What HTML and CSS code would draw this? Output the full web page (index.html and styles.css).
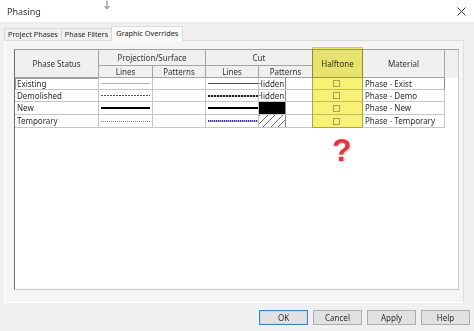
FILE: index.html
```html
<!DOCTYPE html>
<html>
<head>
<meta charset="utf-8">
<title>Phasing</title>
<link rel="stylesheet" href="styles.css">
</head>
<body>
<div class="dialog">
  <div class="titlebar">
    <span class="title">Phasing</span>
    <svg class="cursor" width="8" height="10" viewBox="0 0 8 10"><path d="M4 0.5 V8.5 M1.5 6 L4 8.8 L6.5 6" fill="none" stroke="#7a7a7a" stroke-width="1"/></svg>
    <svg class="close" width="9" height="9" viewBox="0 0 9 9"><path d="M0.5 0.5 L8.5 8.5 M8.5 0.5 L0.5 8.5" stroke="#333" stroke-width="1"/></svg>
  </div>
  <div class="tabs">
    <div class="tab">Project Phases</div>
    <div class="tab">Phase Filters</div>
    <div class="tab active">Graphic Overrides</div>
  </div>
  <div class="panel">
    <div class="gridbox">
      <div class="grid">
        <div class="h h-status">Phase Status</div>
        <div class="h h-proj">Projection/Surface</div>
        <div class="h h-cut">Cut</div>
        <div class="h h-half">Halftone</div>
        <div class="h h-mat">Material</div>
        <div class="h h-fill"></div>
        <div class="h">Lines</div>
        <div class="h">Patterns</div>
        <div class="h">Lines</div>
        <div class="h">Patterns</div>

        <div class="d name focus">Existing</div>
        <div class="d ln"><span class="line l-exist-p"></span></div>
        <div class="d"></div>
        <div class="d ln"><span class="line l-exist-c"></span></div>
        <div class="d pat"><span class="sw sw-text">Hidden</span></div>
        <div class="d half"><span class="chk"></span></div>
        <div class="d name mat first">Phase - Exist</div>
        <div class="d fill"></div>

        <div class="d name">Demolished</div>
        <div class="d ln"><span class="line l-demo-p"></span></div>
        <div class="d"></div>
        <div class="d ln"><span class="line l-demo-c"></span></div>
        <div class="d pat"><span class="sw sw-text">Hidden</span></div>
        <div class="d half"><span class="chk"></span></div>
        <div class="d name mat">Phase - Demo</div>
        <div class="d fill"></div>

        <div class="d name">New</div>
        <div class="d ln"><span class="line l-new"></span></div>
        <div class="d"></div>
        <div class="d ln"><span class="line l-new"></span></div>
        <div class="d pat"><span class="sw sw-solid"></span></div>
        <div class="d half"><span class="chk"></span></div>
        <div class="d name mat">Phase - New</div>
        <div class="d fill"></div>

        <div class="d name">Temporary</div>
        <div class="d ln"><span class="line l-temp-p"></span></div>
        <div class="d"></div>
        <div class="d ln"><span class="line l-temp-c"></span></div>
        <div class="d pat"><span class="sw sw-hatch"></span></div>
        <div class="d half"><span class="chk"></span></div>
        <div class="d name mat">Phase - Temporary</div>
        <div class="d fill"></div>
      </div>
      <div class="highlight"></div>
      <div class="qmark">?</div>
    </div>
  </div>
  <div class="buttons">
    <button class="btn default">OK</button>
    <button class="btn">Cancel</button>
    <button class="btn">Apply</button>
    <button class="btn">Help</button>
  </div>
</div>
</body>
</html>
```

FILE: styles.css
```css
* { box-sizing: border-box; }
html, body { margin: 0; padding: 0; }
body {
  width: 474px;
  height: 331px;
  overflow: hidden;
  background: #f0f0f0;
  font-family: "Noto Sans", "Open Sans", sans-serif;
  font-size: 8px;
  color: #2b2b2b;
}
.dialog { width: 474px; height: 331px; display: flex; flex-direction: column; }

.titlebar {
  position: relative;
  height: 22px;
  background: #ffffff;
  display: flex;
  align-items: center;
  justify-content: space-between;
  padding: 0 8px 0 7px;
}
.title { font-size: 9px; color: #333; }
.close { display: block; }
.cursor { position: absolute; left: 103px; top: 0; }

.tabs {
  display: flex;
  align-items: flex-end;
  height: 18px;
  padding: 0 0 0 4px;
}
.tab {
  height: 12px;
  padding: 0 3px;
  font-size: 7.3px;
  line-height: 11px;
  border: 1px solid #d9d9d9;
  border-bottom: none;
  margin-right: -1px;
  background: #f0f0f0;
  color: #222;
}
.tab.active {
  height: 15px;
  padding: 0 4px 0 4px;
  background: #fafafa;
  margin-bottom: -1px;
  position: relative;
  z-index: 1;
  line-height: 12px;
}

.panel {
  margin: 0 10px 0 4px;
  height: 263px;
  border: 1px solid #dcdcdc;
  border-left-color: #ffffff;
  border-bottom-color: #ffffff;
  background: #f5f5f5;
  padding: 8px 0 0 9px;
}
.gridbox {
  position: relative;
  width: 445px;
  height: 241px;
  background: #ffffff;
  border: 1px solid #c9c9c9;
  border-left-color: #6a6a6a;
  border-top-color: #a0a0a0;
}
.grid {
  display: grid;
  grid-template-columns: 84px 54px 53px 53px 54px 50px 82px 1fr;
  grid-template-rows: 16px 12px 12px 12px 13px 13px;
}
.h {
  background: #f0f0f0;
  border-right: 1px solid #a3a3a3;
  border-bottom: 1px solid #a3a3a3;
  display: flex;
  align-items: center;
  justify-content: center;
  color: #333;
  white-space: nowrap;
  line-height: 1;
}
.h-status { grid-column: 1; grid-row: 1 / 3; }
.h-proj { grid-column: 2 / 4; grid-row: 1; }
.h-cut { grid-column: 4 / 6; grid-row: 1; }
.h-half { grid-column: 6; grid-row: 1 / 3; }
.h-mat { grid-column: 7; grid-row: 1 / 3; }
.h-fill { grid-column: 8; grid-row: 1 / 3; border-right: none; border-bottom: none; }

.d {
  border-right: 1px solid #c6c6c6;
  border-bottom: 1px solid #c6c6c6;
  display: flex;
  align-items: center;
  white-space: nowrap;
  overflow: hidden;
  line-height: 1;
}
.d.name { padding-left: 2px; }
.d.focus { box-shadow: inset 1px 1px 0 #9a9a9a; }
.d.mat.first { border-right-color: #8a8a8a; }
.d.fill { border: none; }
.d.ln { padding: 0 2px 0 2px; }
.d.ln + .d + .d.ln { padding-right: 0; }
.line { display: block; width: 100%; }
.l-exist-p { height: 1px; background: #b0b0b0; }
.l-exist-c { height: 1px; background: #4a4a4a; }
.l-demo-p { height: 1px; background: repeating-linear-gradient(90deg, #555 0 2px, transparent 2px 3px); }
.l-demo-c { height: 2px; background: repeating-linear-gradient(90deg, #222 0 2px, #bbb 2px 3px); }
.l-new { height: 2px; background: #000; }
.l-temp-p { height: 1px; background: repeating-linear-gradient(90deg, #7a7aa0 0 1px, transparent 1px 2px); }
.l-temp-c { height: 2px; background: repeating-linear-gradient(90deg, #3434a8 0 1px, #b8b8e0 1px 2px); }

.d.pat { align-items: stretch; }
.sw {
  display: block;
  width: 27px;
  flex: none;
  border-right: 1px solid #8a8a8a;
}
.sw-text { text-indent: -2px; line-height: 11px; color: #2b2b2b; overflow: hidden; }
.sw-solid { background: #000; }
.sw-hatch {
  background: repeating-linear-gradient(-45deg, #ffffff 0 4.5px, #6a6a6a 4.5px 5.3px);
}

.d.half { justify-content: center; }
.chk {
  display: block;
  width: 7px;
  height: 7px;
  border: 1px solid #a9a9a9;
  background: transparent;
  margin-left: -3px;
}

.highlight {
  position: absolute;
  left: 297px;
  top: -3px;
  width: 51px;
  height: 81px;
  background: #f7f275;
  border: 1px solid #e2da3a;
  mix-blend-mode: multiply;
  pointer-events: none;
}
.qmark {
  position: absolute;
  left: 317px;
  top: 84px;
  font-family: "Liberation Sans", Arial, sans-serif;
  font-weight: bold;
  font-size: 32px;
  line-height: 1;
  color: #e8343b;
  text-shadow: 1px 1px 2px rgba(120, 120, 120, 0.35);
}

.buttons {
  display: flex;
  justify-content: flex-end;
  gap: 5px;
  padding: 7px 4px 0 0;
}
.btn {
  width: 49px;
  height: 15px;
  padding: 0;
  font-family: "Noto Sans", "Open Sans", sans-serif;
  font-size: 8px;
  color: #2b2b2b;
  background: #e1e1e1;
  border: 1px solid #adadad;
  line-height: 1;
}
.btn.default { border-color: #3c83c4; box-shadow: inset 0 0 0 1px #c5daee; }
```
